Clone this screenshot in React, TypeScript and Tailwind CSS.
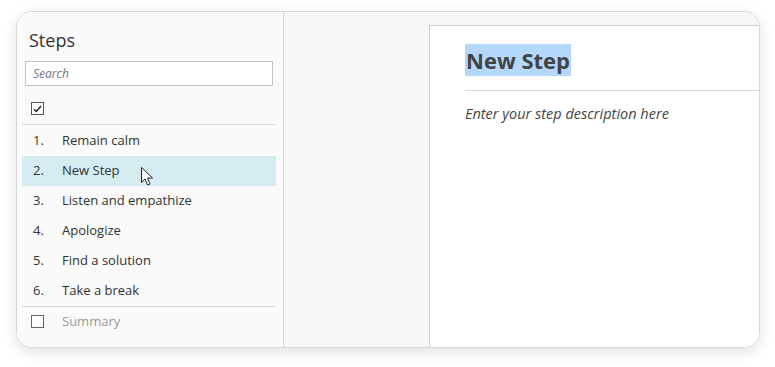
import React from "react";

const steps = ["Remain calm", "New Step", "Listen and empathize", "Apologize", "Find a solution", "Take a break"];

function Cursor() {
  return (
    <svg width="13" height="20" viewBox="0 0 13 20" className="absolute left-[124px] top-[155px]">
      <path d="M0.5 0.5 L0.5 15.5 L4 12 L6.5 18 L9 17 L6.5 11 L11.5 11 Z" fill="#fff" stroke="#222" strokeWidth="1" strokeLinejoin="miter" />
    </svg>
  );
}

export default function App() {
  return (
    <div className="w-[775px] h-[367px] bg-white pt-[11px] pl-[16px]" style={{ fontFamily: '"Open Sans", "Noto Sans", sans-serif' }}>
      <div className="relative w-[744px] h-[337px] rounded-[16px] border border-[#d6d6d6] overflow-hidden flex shadow-[0_4px_14px_rgba(0,0,0,0.12)]">
        <div className="w-[267px] shrink-0 bg-[#fafafa] border-r border-[#d4d4d4] pl-[5px] pr-[7px] flex flex-col">
          <div className="pl-[7px] pt-[16px] h-[49px] text-[18px] leading-[24px] text-[#333]">Steps</div>
          <div className="ml-[3px] mr-[3px] h-[25px] border border-[#c4c4c4] bg-white flex items-center pl-[7px] text-[12px] italic text-[#777]">Search</div>
          <div className="h-[39px] border-b border-[#d6d6d6] flex items-start pt-[16px] pl-[9px]">
            <div className="w-[13px] h-[13px] border border-[#555] bg-white flex items-center justify-center">
              <svg width="9" height="8" viewBox="0 0 9 8"><path d="M1 4.2 L3.3 6.5 L8 1" fill="none" stroke="#222" strokeWidth="1.5" /></svg>
            </div>
          </div>
          <div className="pt-[1px]">
            {steps.map((s, i) => (
              <div key={s} className={`h-[30px] flex items-center text-[13px] text-[#333] ${i === 1 ? "bg-[#d5ecf0]" : ""}`}>
                <span className="w-[40px] pl-[11px]">{i + 1}.</span>
                <span>{s}</span>
              </div>
            ))}
          </div>
          <div className="h-[30px] border-t border-[#d6d6d6] flex items-center text-[13px] text-[#999]">
            <div className="w-[40px] pl-[9px]">
              <div className="w-[13px] h-[13px] border border-[#666] bg-white" />
            </div>
            <span>Summary</span>
          </div>
        </div>
        <div className="flex-1 bg-[#f6f6f6] pt-[13px] pl-[145px]">
          <div className="h-full bg-white border-l border-t border-[#cfcfcf] pl-[35px] pt-[18px]">
            <div className="h-[46px]">
              <span className="inline-block bg-[#b3d8fc] text-[22px] leading-[32px] font-bold text-[#444] px-[1px]">New Step</span>
            </div>
            <div className="border-t border-[#d6d6e0]" />
            <div className="pt-[12px] text-[14.5px] italic text-[#444]">Enter your step description here</div>
          </div>
        </div>
        <Cursor />
      </div>
    </div>
  );
}
